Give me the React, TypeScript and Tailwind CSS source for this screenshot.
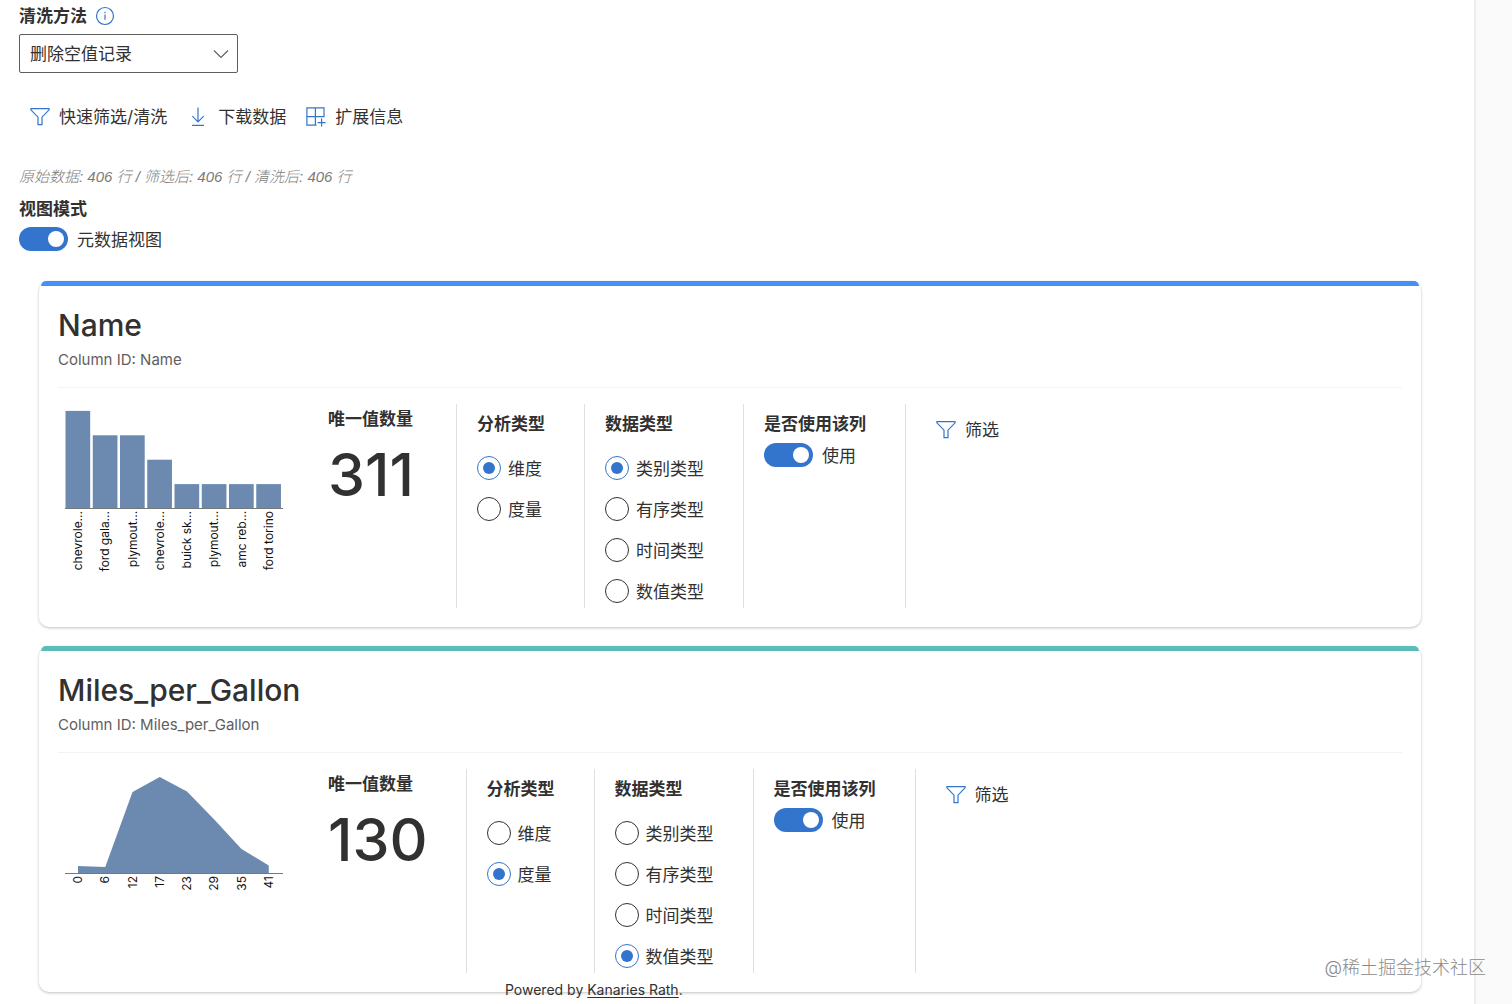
import type { ReactNode } from "react";

type Column = {
  id: string;
  accent: string;
  unique: number;
  analyticType: string;
  semanticType: string;
  chart: ReactNode;
};

const ANALYTIC_TYPES = ["维度", "度量"];
const SEMANTIC_TYPES = ["类别类型", "有序类型", "时间类型", "数值类型"];

const NAME_BARS = [
  { label: "chevrole…", value: 4 },
  { label: "ford gala…", value: 3 },
  { label: "plymout…", value: 3 },
  { label: "chevrole…", value: 2 },
  { label: "buick sk…", value: 1 },
  { label: "plymout…", value: 1 },
  { label: "amc reb…", value: 1 },
  { label: "ford torino", value: 1 },
];

const MPG_POINTS = [
  { label: "0", value: 7.5 },
  { label: "6", value: 6.5 },
  { label: "12", value: 81.5 },
  { label: "17", value: 96.5 },
  { label: "23", value: 82 },
  { label: "29", value: 54 },
  { label: "35", value: 24.5 },
  { label: "41", value: 8 },
];

const STEP = 27.25;
const BASELINE = 104.5;

const COLUMNS: Column[] = [
  {
    id: "Name",
    accent: "bg-[#4490f7]",
    unique: 311,
    analyticType: "维度",
    semanticType: "类别类型",
    chart: <BarChart />,
  },
  {
    id: "Miles_per_Gallon",
    accent: "bg-[#5bbcba]",
    unique: 130,
    analyticType: "度量",
    semanticType: "数值类型",
    chart: <AreaChart />,
  },
];

export default function App() {
  return (
    <div className="relative h-screen overflow-hidden bg-[#fafafa] font-['Inter','Noto_Sans_CJK_SC',sans-serif] text-[17px] text-[#323130]">
      <main className="mr-9 min-h-full border-r-2 border-[#ececec] bg-white pl-[19px]">
        <div className="flex h-8 items-center gap-2">
          <label htmlFor="clean-method" className="pt-0.5 font-semibold">
            清洗方法
          </label>
          <button type="button" aria-label="info">
            <InfoIcon />
          </button>
        </div>
        <div className="mt-0.5 grid w-[219px] items-center">
          <select
            id="clean-method"
            className="col-start-1 row-start-1 h-[39px] appearance-none rounded-xs border border-[#605e5c] bg-white px-2.5 pt-0.5"
          >
            <option>删除空值记录</option>
          </select>
          <ChevronIcon />
        </div>

        <div className="mt-[22px] flex h-11 items-center gap-5 pl-[11px]">
          <CommandButton icon={<FilterIcon />} label="快速筛选/清洗" />
          <CommandButton icon={<DownloadIcon />} label="下载数据" />
          <CommandButton icon={<ExtendIcon />} label="扩展信息" />
        </div>

        <p className="mt-[27px] font-['Liberation_Sans','Noto_Sans_CJK_SC',sans-serif] text-[15px] leading-[22px] font-light text-[#7d7b78] italic">
          原始数据: 406 行 / 筛选后: 406 行 / 清洗后: 406 行
        </p>
        <p className="mt-1.5 leading-[30px] font-semibold">视图模式</p>
        <div className="mt-[3px]">
          <Toggle label="元数据视图" />
        </div>

        <div className="mt-[30px] mr-[53px] ml-5 flex flex-col gap-[19px]">
          {COLUMNS.map((column) => (
            <ColumnCard key={column.id} column={column} />
          ))}
        </div>
      </main>

      <footer className="absolute bottom-1 left-[505px] text-[14px] leading-5">
        Powered by{" "}
        <a href="#rath" className="underline underline-offset-2">
          Kanaries Rath
        </a>
        .
      </footer>
      <p className="absolute right-[26px] bottom-6 text-[18px] leading-6 font-light text-[#8a8a8a]">@稀土掘金技术社区</p>
    </div>
  );
}

function ColumnCard({ column }: { column: Column }) {
  return (
    <section className="rounded-[10px] bg-white shadow-[0_1px_3px_rgba(0,0,0,0.25)]">
      <div className={`mx-0.5 h-[5px] rounded-t-[6px] ${column.accent}`} />
      <div className="px-[19px] py-[19px]">
        <h2 className="text-[30px] leading-10 font-medium">{column.id}</h2>
        <p className="mt-[5px] text-[15px] leading-5 text-[#605e5c]">Column ID: {column.id}</p>
        <hr className="mt-[17px] mb-4 border-[#f3f3f3]" />
        <div className="flex">
          <div className="w-[270px] shrink-0">{column.chart}</div>
          <div className="min-w-32 pr-[38px]">
            <h3 className="leading-[30px] font-semibold">唯一值数量</h3>
            <p className="mt-[7px] text-[59px] leading-[68px] font-medium">{column.unique}</p>
          </div>
          <Panel>
            <RadioGroup title="分析类型" name={`${column.id}-analytic`} options={ANALYTIC_TYPES} selected={column.analyticType} />
          </Panel>
          <Panel>
            <RadioGroup title="数据类型" name={`${column.id}-semantic`} options={SEMANTIC_TYPES} selected={column.semanticType} />
          </Panel>
          <Panel>
            <h3 className="mb-1 leading-[30px] font-semibold">是否使用该列</h3>
            <Toggle label="使用" />
          </Panel>
          <Panel>
            <div className="px-2.5 pt-[9px]">
              <CommandButton icon={<FilterIcon />} label="筛选" />
            </div>
          </Panel>
        </div>
      </div>
    </section>
  );
}

function Panel({ children }: { children: ReactNode }) {
  return <div className="border-l border-[#e1dfdd] py-[5px] pr-[39px] pl-5">{children}</div>;
}

function RadioGroup({ title, name, options, selected }: { title: string; name: string; options: string[]; selected: string }) {
  return (
    <fieldset>
      <legend className="leading-[30px] font-semibold">{title}</legend>
      <div className="mt-[17px] flex flex-col gap-[17px]">
        {options.map((option) => (
          <label key={option} className="flex h-6 items-center gap-[7px]">
            <input
              type="radio"
              name={name}
              defaultChecked={option === selected}
              className="grid size-6 shrink-0 appearance-none place-items-center rounded-full border border-[#323130] before:size-3 before:rounded-full checked:border-[#3375cd] checked:before:bg-[#3375cd]"
            />
            <span className="pt-1">{option}</span>
          </label>
        ))}
      </div>
    </fieldset>
  );
}

function Toggle({ label }: { label: string }) {
  return (
    <label className="flex h-6 items-center gap-[9px]">
      <input
        type="checkbox"
        role="switch"
        defaultChecked
        className="flex h-6 w-[49px] shrink-0 appearance-none items-center rounded-full bg-[#8a8886] px-1 before:size-4 before:rounded-full before:bg-white checked:justify-end checked:bg-[#3375cd]"
      />
      <span className="pt-1">{label}</span>
    </label>
  );
}

function CommandButton({ icon, label }: { icon: ReactNode; label: string }) {
  return (
    <button type="button" className="flex items-center gap-[9px] leading-6 whitespace-nowrap">
      {icon}
      {label}
    </button>
  );
}

function BarChart() {
  return (
    <svg width="230" height="180" className="font-['Inter',sans-serif]">
      {NAME_BARS.map((bar, i) => (
        <g key={i}>
          <rect x={7.5 + i * STEP} y={BASELINE - bar.value * 24.4} width="24.7" height={bar.value * 24.4} fill="#6c8ab0" />
          <AxisLabel index={i} label={bar.label} />
        </g>
      ))}
      <path d={`M7 ${BASELINE}h218`} stroke="#777" />
    </svg>
  );
}

function AreaChart() {
  const line = MPG_POINTS.map((point, i) => `L${20 + i * STEP} ${BASELINE - point.value}`).join("");
  return (
    <svg width="230" height="180" className="font-['Inter',sans-serif]">
      <path d={`M20 ${BASELINE}${line}V${BASELINE}z`} fill="#6c8ab0" />
      <path d={`M7 ${BASELINE}h218`} stroke="#777" />
      {MPG_POINTS.map((point, i) => (
        <AxisLabel key={point.label} index={i} label={point.label} />
      ))}
    </svg>
  );
}

function AxisLabel({ index, label }: { index: number; label: string }) {
  return (
    <text transform={`translate(${24 + index * STEP} 107) rotate(-90)`} textAnchor="end" fontSize="12" fill="#111">
      {label}
    </text>
  );
}

function InfoIcon() {
  return (
    <svg width="20" height="20" viewBox="0 0 20 20" fill="none" stroke="#3375cd" strokeWidth="1.2">
      <circle cx="10" cy="10" r="8.5" />
      <path d="M10 8.4v5.4M10 5.8v1.4" />
    </svg>
  );
}

function ChevronIcon() {
  return (
    <svg
      width="16"
      height="10"
      viewBox="0 0 16 10"
      fill="none"
      stroke="#605e5c"
      strokeWidth="1.1"
      className="pointer-events-none col-start-1 row-start-1 mr-[9px] justify-self-end"
    >
      <path d="M1 1.5l7 7 7-7" />
    </svg>
  );
}

function FilterIcon() {
  return (
    <svg width="20" height="20" viewBox="0 0 20 20" fill="none" stroke="#3375cd" strokeWidth="1.2">
      <path d="M.9 1.6h18.2v1.2L12 10.2v7.4H8v-7.4L.9 2.8z" />
    </svg>
  );
}

function DownloadIcon() {
  return (
    <svg width="22" height="20" viewBox="0 0 22 20" fill="none" stroke="#3375cd" strokeWidth="1.2">
      <path d="M11 .5v14.3M5.3 9.2l5.7 5.7 5.7-5.7M5 18.4h12" />
    </svg>
  );
}

function ExtendIcon() {
  return (
    <svg width="20" height="20" viewBox="0 0 20 20" fill="none" stroke="#3375cd" strokeWidth="1.2">
      <path d="M10.5 18.1H.9V.9H18v9.3M9.4.9v17.2M.9 9.6H18M15.6 11.6v8M11.6 15.6h8" />
    </svg>
  );
}
